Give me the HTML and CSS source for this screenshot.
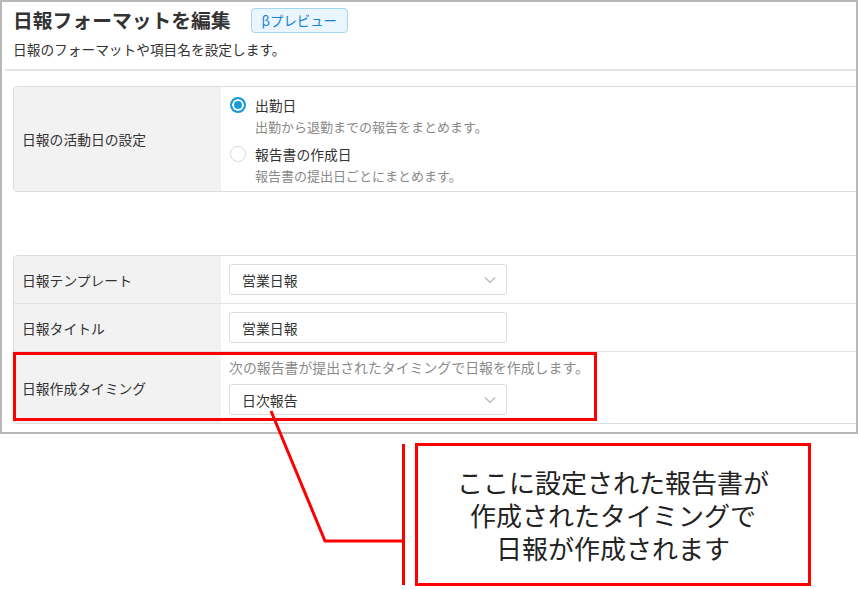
FILE: index.html
```html
<!DOCTYPE html>
<html lang="ja">
<head>
<meta charset="utf-8">
<title>日報フォーマットを編集</title>
<link rel="stylesheet" href="styles.css">
</head>
<body>
<div class="page">
  <div class="frame">
    <div class="header">
      <div class="title-row">
        <h1 class="title">日報フォーマットを編集</h1>
        <span class="badge">βプレビュー</span>
      </div>
      <p class="subtitle">日報のフォーマットや項目名を設定します。</p>
    </div>
    <div class="divider"></div>

    <div class="card card-activity">
      <div class="label">日報の活動日の設定</div>
      <div class="options">
        <div class="option">
          <div class="option-head"><span class="radio checked"></span><span>出勤日</span></div>
          <div class="option-desc">出勤から退勤までの報告をまとめます。</div>
        </div>
        <div class="option">
          <div class="option-head"><span class="radio"></span><span>報告書の作成日</span></div>
          <div class="option-desc">報告書の提出日ごとにまとめます。</div>
        </div>
      </div>
    </div>

    <div class="card card-settings">
      <div class="row">
        <div class="label">日報テンプレート</div>
        <div class="field">
          <div class="select"><span>営業日報</span>
            <svg class="chev" width="12" height="8" viewBox="0 0 12 8"><path d="M1 1.5 L6 6.5 L11 1.5" fill="none" stroke="#b4b4b4" stroke-width="1.2"/></svg>
          </div>
        </div>
      </div>
      <div class="row">
        <div class="label">日報タイトル</div>
        <div class="field">
          <div class="select"><span>営業日報</span></div>
        </div>
      </div>
      <div class="row row-timing">
        <div class="label">日報作成タイミング</div>
        <div class="field">
          <div class="field-desc">次の報告書が提出されたタイミングで日報を作成します。</div>
          <div class="select"><span>日次報告</span>
            <svg class="chev" width="12" height="8" viewBox="0 0 12 8"><path d="M1 1.5 L6 6.5 L11 1.5" fill="none" stroke="#b4b4b4" stroke-width="1.2"/></svg>
          </div>
        </div>
      </div>
    </div>
  </div>

  <div class="callout-area">
    <div class="callout-bar"></div>
    <div class="callout">
      <span class="callout-line">ここに設定された報告書が</span>
      <span class="callout-line">作成されたタイミングで</span>
      <span class="callout-line">日報が作成されます</span>
    </div>
  </div>

  <div class="highlight"></div>
  <svg class="leader" width="858" height="589" viewBox="0 0 858 589">
    <polyline points="271,411 325,541 403,541" fill="none" stroke="#ff0000" stroke-width="3"/>
  </svg>
</div>
</body>
</html>
```

FILE: styles.css
```css
html, body {
  margin: 0;
  padding: 0;
  background: #ffffff;
}

body {
  font-family: "Noto Sans CJK JP", "Noto Sans", sans-serif;
  color: #333333;
}

.page {
  position: relative;
  width: 858px;
  height: 589px;
  overflow: hidden;
}

.frame {
  box-sizing: border-box;
  width: 858px;
  height: 434px;
  border: 2px solid #b7b7b7;
  overflow: hidden;
}

.header {
  padding: 4px 0 0 11px;
}

.title-row {
  display: flex;
  align-items: center;
  gap: 20px;
  height: 28px;
}

.title {
  margin: 0;
  font-size: 19.8px;
  font-weight: 700;
  line-height: 28px;
  color: #333333;
}

.badge {
  box-sizing: border-box;
  height: 25px;
  padding: 0 10px;
  border: 1px solid #a3d5f5;
  background: #e9f6fe;
  color: #1b7fd1;
  border-radius: 4px;
  font-size: 13.4px;
  line-height: 23px;
}

.subtitle {
  margin: 5px 0 0;
  font-size: 13.7px;
  line-height: 20px;
  color: #333333;
}

.divider {
  margin: 10px 0 0 3px;
  height: 2px;
  background: #e4e4e4;
}

.card {
  margin-left: 11px;
  margin-right: -20px;
  border: 1px solid #dcdcdc;
  border-radius: 4px;
  overflow: hidden;
}

.card-activity {
  margin-top: 15px;
  display: flex;
}

.label {
  box-sizing: border-box;
  width: 207px;
  flex: none;
  background: #f2f2f2;
  padding-left: 8px;
  display: flex;
  align-items: center;
  font-size: 13.8px;
  color: #333333;
}

.options {
  padding: 7px 0 4px 9px;
  display: flex;
  flex-direction: column;
  gap: 5px;
}

.option-head {
  display: flex;
  align-items: center;
  gap: 9px;
  height: 22px;
  font-size: 13.8px;
  line-height: 22px;
}

.radio {
  box-sizing: border-box;
  width: 16px;
  height: 16px;
  border-radius: 50%;
  border: 1px solid #d8d8d8;
  background: #ffffff;
}

.radio.checked {
  border: 2px solid #1a9ad6;
  background: #1a9ad6;
  box-shadow: inset 0 0 0 2px #ffffff;
}

.option-desc {
  margin-left: 25px;
  font-size: 13px;
  line-height: 22px;
  color: #8a8a8a;
}

.card-settings {
  margin-top: 63px;
}

.row {
  display: flex;
  border-top: 1px solid #e2e2e2;
}

.row:first-child {
  border-top: 0;
}

.field {
  flex: 1;
  padding: 8px 8px;
}

.row-timing .field {
  padding: 5px 8px 8px;
}

.field-desc {
  font-size: 13.9px;
  line-height: 20px;
  color: #8a8a8a;
  margin-bottom: 7px;
}

.select {
  box-sizing: border-box;
  width: 278px;
  height: 31px;
  border: 1px solid #dcdcdc;
  border-radius: 3px;
  display: flex;
  align-items: center;
  justify-content: space-between;
  padding: 0 10px 0 12px;
  font-size: 13.9px;
  color: #333333;
}

.callout-area {
  display: flex;
  align-items: center;
  gap: 10px;
  margin: 9px 0 0 402px;
}

.callout-bar {
  width: 3px;
  height: 141px;
  background: #ff0000;
}

.callout {
  box-sizing: border-box;
  width: 396px;
  height: 143px;
  border: 3px solid #ff0000;
  display: flex;
  flex-direction: column;
  align-items: center;
  justify-content: center;
  text-align: center;
  font-size: 26px;
  color: #222222;
}

.callout-line {
  display: block;
  height: 33px;
  line-height: 33px;
  overflow: visible;
}

.highlight {
  position: absolute;
  left: 13px;
  top: 352px;
  width: 584px;
  height: 69px;
  box-sizing: border-box;
  border: 3px solid #ff0000;
}

.leader {
  position: absolute;
  left: 0;
  top: 0;
  pointer-events: none;
}
```
